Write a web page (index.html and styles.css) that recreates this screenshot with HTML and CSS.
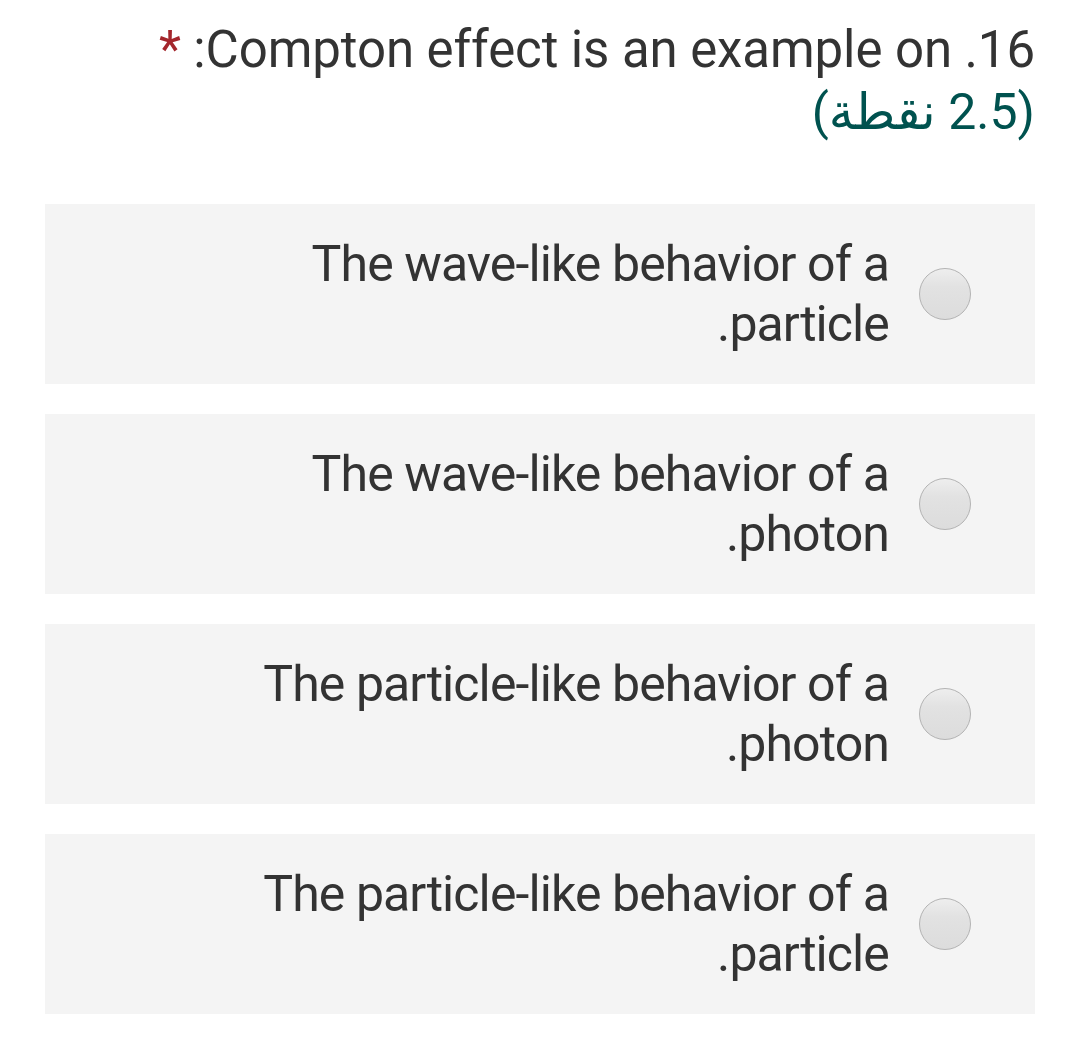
FILE: index.html
```html
<!DOCTYPE html>
<html lang="ar" dir="rtl">
<head>
<meta charset="utf-8">
<title>Question 16</title>
<link rel="stylesheet" href="styles.css">
</head>
<body>
<main class="page">
  <div class="question-title">
    <span class="q-text">16. Compton effect is an example on: <span class="req">*</span></span>
    <span class="points">(2.5 نقطة)</span>
  </div>
  <div class="options">
    <label class="option">
      <input class="radio" type="radio" name="q16">
      <span class="opt-text">The wave-like behavior of a particle.</span>
    </label>
    <label class="option">
      <input class="radio" type="radio" name="q16">
      <span class="opt-text">The wave-like behavior of a photon.</span>
    </label>
    <label class="option">
      <input class="radio" type="radio" name="q16">
      <span class="opt-text">The particle-like behavior of a photon.</span>
    </label>
    <label class="option">
      <input class="radio" type="radio" name="q16">
      <span class="opt-text">The particle-like behavior of a particle.</span>
    </label>
  </div>
</main>
</body>
</html>
```

FILE: styles.css
```css
html, body {
  margin: 0;
  padding: 0;
  background: #ffffff;
}

body {
  font-family: Roboto, "DejaVu Sans", "Noto Sans", sans-serif;
  color: #333333;
}

.page {
  padding: 18px 45px 0 45px;
}

.question-title {
  padding-right: 0;
  text-align: right;
  font-size: 51px;
  line-height: 63px;
  letter-spacing: -0.1px;
  color: #333333;
}

.q-text {
  display: block;
}

.req {
  color: #a4262c;
}

.points {
  display: block;
  color: #00524f;
  font-size: 50px;
}

.options {
  margin-top: 60px;
  display: flex;
  flex-direction: column;
  gap: 30px;
}

.option {
  display: flex;
  align-items: center;
  gap: 30px;
  background: #f4f4f4;
  padding: 30px 64px 30px 64px;
  min-height: 120px;
}

.radio {
  appearance: none;
  -webkit-appearance: none;
  margin: 0;
  flex: 0 0 auto;
  width: 52px;
  height: 52px;
  border-radius: 50%;
  border: 1.5px solid #b3b3b3;
  background: linear-gradient(to bottom, #eeeeee 0%, #e2e2e2 35%, #dcdcdc 100%);
  box-sizing: border-box;
}

.opt-text {
  flex: 0 1 690px;
  text-align: right;
  font-size: 50px;
  line-height: 60px;
  letter-spacing: -0.9px;
  color: #333333;
}
```
